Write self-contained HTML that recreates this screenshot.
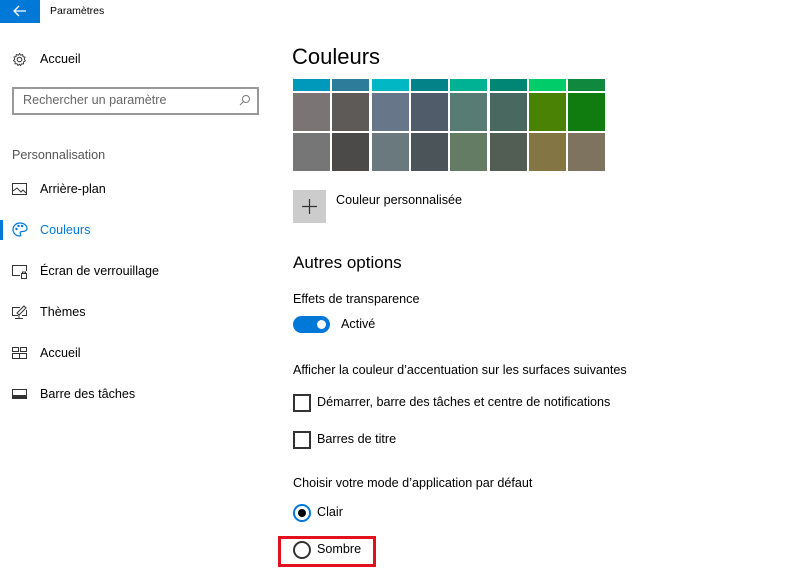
<!DOCTYPE html>
<html><head><meta charset="utf-8"><style>
body{margin:0;width:800px;height:569px;background:#fff;font-family:"Liberation Sans",sans-serif;color:#000;position:relative;overflow:hidden}
.a{position:absolute;white-space:nowrap}
.t{font-size:12.6px}
.sw{position:absolute;width:37px}
.nav{position:absolute;left:40px;font-size:12.6px}
.ic{position:absolute;left:12px}
</style></head><body>
<div class="a" style="left:0;top:0;width:40px;height:23px;background:#0078d7"></div>
<svg class="a" style="left:13px;top:5px" width="14" height="12"><path d="M1 6H13M6 1L1 6L6 11" stroke="#fff" stroke-width="1.3" fill="none"/></svg>
<div class="a" style="left:50px;top:5px;font-size:10.5px">Paramètres</div>

<svg class="a" style="left:12px;top:52px" width="15" height="15" viewBox="0 0 15 15"><circle cx="7.5" cy="7.5" r="2.3" fill="none" stroke="#333"/><path d="M7.5 1.5L8.7 3.2 10.7 2.6 11 4.6 13 5.2 12.2 7.1 13.4 8.8 11.6 9.8 11.6 11.9 9.6 11.8 8.6 13.6 7.5 12.3 5.9 13.5 5 11.7 3 11.8 3.2 9.7 1.5 8.6 2.8 7 2 5.1 4 4.6 4.3 2.6 6.3 3.2Z" fill="none" stroke="#333" stroke-width="0.9"/></svg>
<div class="nav" style="top:52px">Accueil</div>
<div class="a" style="left:12px;top:87px;width:243px;height:24px;border:2px solid #999"></div>
<div class="a t" style="left:23px;top:93px;color:#666">Rechercher un paramètre</div>
<svg class="a" style="left:239px;top:94px" width="12" height="12"><circle cx="7" cy="5" r="3.5" fill="none" stroke="#777"/><path d="M4.5 7.5L1 11" stroke="#777"/></svg>
<div class="a t" style="left:12px;top:148px;color:#555">Personnalisation</div>

<svg class="ic" style="top:183px" width="15" height="12"><rect x="0.5" y="0.5" width="14" height="11" fill="none" stroke="#333"/><path d="M1 8L5 5 9 9 11 7 14 10" fill="none" stroke="#333"/></svg>
<div class="nav" style="top:182px">Arrière-plan</div>
<div class="a" style="left:0;top:220px;width:3px;height:20px;background:#0078d7"></div>
<svg class="ic" style="top:222px" width="16" height="15"><path d="M8 1C4 1 1 4 1 7.5 1 11 4 14 7.5 14 9 14 9 12.5 8.3 11.5 7.7 10.5 8.5 9.5 10 9.5 13 9.5 15 8.5 15 6.5 15 3.5 12 1 8 1Z" fill="none" stroke="#0078d7" stroke-width="1.2"/><circle cx="4.5" cy="7" r="1.2" fill="#0078d7"/><circle cx="6.5" cy="4" r="1.2" fill="#0078d7"/><circle cx="10" cy="4" r="1.2" fill="#0078d7"/></svg>
<div class="nav" style="top:223px;color:#0078d7">Couleurs</div>
<svg class="ic" style="top:265px" width="16" height="14"><path d="M8 10.5H0.5V0.5H14.5V6" fill="none" stroke="#333"/><rect x="9.5" y="8.5" width="5" height="5" fill="none" stroke="#333"/><path d="M10.5 8.5V7H13.5V8.5" fill="none" stroke="#333"/></svg>
<div class="nav" style="top:264px">Écran de verrouillage</div>
<svg class="ic" style="top:305px" width="16" height="14"><path d="M6 10.5H0.5V2.5H8M14.5 5V10.5H10M3 13.5H11M7 10.5V13.5" fill="none" stroke="#333"/><path d="M5 8L12 1 14 3 7 10Z" fill="none" stroke="#333"/></svg>
<div class="nav" style="top:305px">Thèmes</div>
<svg class="ic" style="top:347px" width="15" height="12"><rect x="0.5" y="0.5" width="6" height="4" fill="none" stroke="#333"/><rect x="8.5" y="0.5" width="6" height="4" fill="none" stroke="#333"/><rect x="0.5" y="6.5" width="14" height="5" fill="none" stroke="#333"/><path d="M7.5 6.5V11.5" stroke="#333"/></svg>
<div class="nav" style="top:346px">Accueil</div>
<svg class="ic" style="top:389px" width="15" height="10"><rect x="0.5" y="0.5" width="14" height="9" fill="none" stroke="#333"/><rect x="1" y="6" width="13" height="3" fill="#333"/></svg>
<div class="nav" style="top:387px">Barre des tâches</div>

<div class="a" style="left:292px;top:44px;font-size:22px">Couleurs</div>
<div id="g"></div>
<div class="a" style="left:293px;top:190px;width:33px;height:33px;background:#ccc"></div>
<svg class="a" style="left:301px;top:198px" width="17" height="17"><path d="M8.5 1V16M1 8.5H16" stroke="#333" stroke-width="1.2"/></svg>
<div class="a t" style="left:336px;top:193px">Couleur personnalisée</div>

<div class="a" style="left:293px;top:253px;font-size:17px">Autres options</div>
<div class="a t" style="left:293px;top:292px">Effets de transparence</div>
<div class="a" style="left:293px;top:316px;width:37px;height:17px;border-radius:9px;background:#0078d7"></div>
<div class="a" style="left:317px;top:320px;width:9px;height:9px;border-radius:50%;background:#fff"></div>
<div class="a t" style="left:341px;top:317px">Activé</div>
<div class="a t" style="left:293px;top:363px">Afficher la couleur d’accentuation sur les surfaces suivantes</div>
<div class="a" style="left:293px;top:394px;width:14px;height:14px;border:2px solid #333"></div>
<div class="a t" style="left:317px;top:395px">Démarrer, barre des tâches et centre de notifications</div>
<div class="a" style="left:293px;top:431px;width:14px;height:14px;border:2px solid #333"></div>
<div class="a t" style="left:317px;top:432px">Barres de titre</div>
<div class="a t" style="left:293px;top:476px">Choisir votre mode d’application par défaut</div>
<div class="a" style="left:293px;top:504px;width:14px;height:14px;border:2px solid #0078d7;border-radius:50%"></div>
<div class="a" style="left:298px;top:509px;width:8px;height:8px;background:#000;border-radius:50%"></div>
<div class="a t" style="left:317px;top:505px">Clair</div>
<div class="a" style="left:278px;top:536px;width:92px;height:25px;border:3px solid #e3101e"></div>
<div class="a" style="left:293px;top:541px;width:14px;height:14px;border:2px solid #333;border-radius:50%"></div>
<div class="a t" style="left:317px;top:542px">Sombre</div>
<script>
var tc=["#0099bc","#2d7d9a","#00b7c3","#038387","#00b294","#018574","#00cc6a","#10893e"];
var r1=["#7a7574","#5d5a58","#68768a","#515c6b","#567c73","#486860","#498205","#107c10"];
var r2=["#767676","#4c4a48","#69797e","#4a5459","#647c64","#525e54","#847545","#7e735f"];
var h="";for(var i=0;i<8;i++){var x=293+Math.round(i*39.3);
h+='<div class="sw" style="left:'+x+'px;top:79px;height:12px;background:'+tc[i]+'"></div>';
h+='<div class="sw" style="left:'+x+'px;top:93px;height:38px;background:'+r1[i]+'"></div>';
h+='<div class="sw" style="left:'+x+'px;top:133px;height:38px;background:'+r2[i]+'"></div>';}
document.getElementById("g").innerHTML=h;
</script>
</body></html>
